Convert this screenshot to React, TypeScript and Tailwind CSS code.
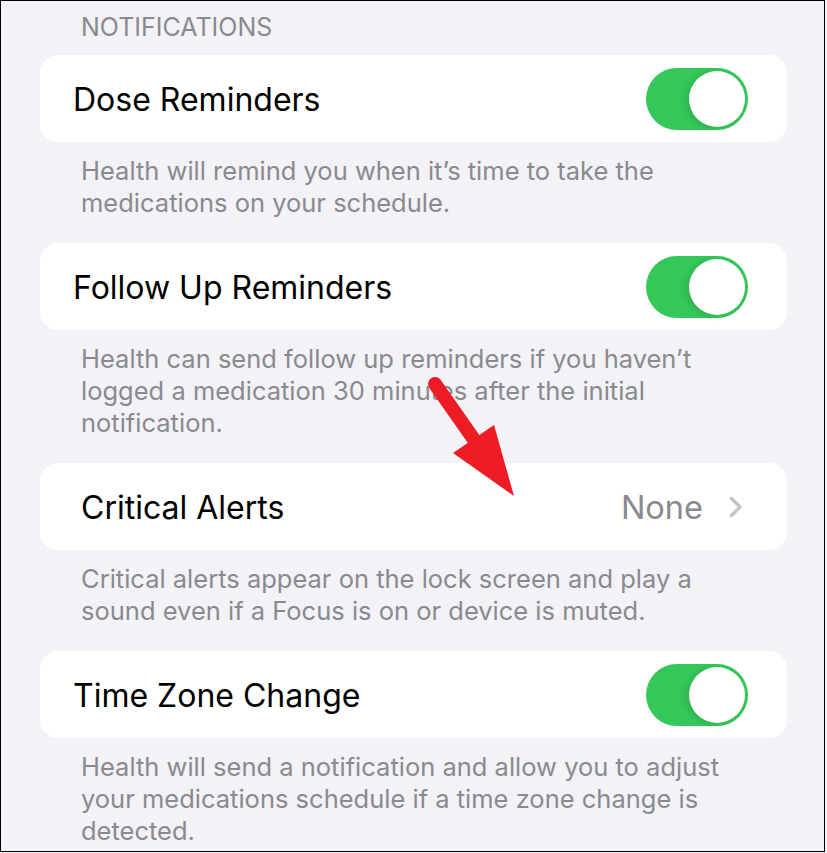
import type { ReactNode } from "react";

type Row = {
  label: string;
  footer: string[];
  kind: "toggle" | "link";
  value?: string;
};

const ROWS: Row[] = [
  {
    label: "Dose Reminders",
    kind: "toggle",
    footer: [
      "Health will remind you when it\u2019s time to take the",
      "medications on your schedule.",
    ],
  },
  {
    label: "Follow Up Reminders",
    kind: "toggle",
    footer: [
      "Health can send follow up reminders if you haven\u2019t",
      "logged a medication 30 minutes after the initial",
      "notification.",
    ],
  },
  {
    label: "Critical Alerts",
    kind: "link",
    value: "None",
    footer: [
      "Critical alerts appear on the lock screen and play a",
      "sound even if a Focus is on or device is muted.",
    ],
  },
  {
    label: "Time Zone Change",
    kind: "toggle",
    footer: [
      "Health will send a notification and allow you to adjust",
      "your medications schedule if a time zone change is",
      "detected.",
    ],
  },
];

function Toggle() {
  return (
    <div className="flex h-[62px] w-[102px] items-center justify-end rounded-full bg-[#34c759] p-[3px]">
      <div className="h-[56px] w-[56px] rounded-full bg-white shadow-[-3px_1px_6px_rgba(0,0,0,0.12)]" />
    </div>
  );
}

function Chevron() {
  return (
    <svg width="14" height="22" viewBox="0 0 14 22" fill="none">
      <path
        d="M2.5 2.5 L11 11 L2.5 19.5"
        stroke="#c4c4c7"
        strokeWidth="3.4"
        strokeLinecap="round"
        strokeLinejoin="round"
      />
    </svg>
  );
}

function Card({ row }: { row: Row }) {
  const isLink = row.kind === "link";
  let trailing: ReactNode;
  if (isLink) {
    trailing = (
      <div className="flex items-center gap-[26px] pr-[44px]">
        <span className="pt-[3px] text-[32.5px] text-[#8a8a8e]">{row.value}</span>
        <Chevron />
      </div>
    );
  } else {
    trailing = (
      <div className="pr-[39px]">
        <Toggle />
      </div>
    );
  }

  return (
    <div className="flex h-[87px] items-center justify-between rounded-[18px] bg-white">
      <span
        className={`pt-[3px] text-[32px] text-black ${
          isLink ? "pl-[41px]" : "pl-[33px]"
        }`}
      >
        {row.label}
      </span>
      {trailing}
    </div>
  );
}

function RedArrow() {
  return (
    <svg
      className="pointer-events-none absolute left-[420px] top-[370px]"
      width="110"
      height="135"
      viewBox="420 370 110 135"
    >
      <line
        x1="434"
        y1="383"
        x2="474"
        y2="440"
        stroke="#ed1c24"
        strokeWidth="14"
        strokeLinecap="round"
      />
      <polygon points="452,452 493,424 513,495" fill="#ed1c24" />
    </svg>
  );
}

export default function App() {
  return (
    <div className="min-h-screen bg-[#f2f2f7]">
      <div
        className="relative h-[852px] w-[825px] overflow-hidden border border-black bg-[#f2f2f7]"
        style={{ fontFamily: "Inter, 'Noto Sans', sans-serif" }}
      >
        <div className="pl-[39px] pr-[37px] pt-[10px]">
          <div className="pl-[41px] text-[25px] leading-[32px] text-[#8a8a8e]">
            NOTIFICATIONS
          </div>
          <div className="mt-[12px]">
            {ROWS.map((row) => (
              <div key={row.label}>
                <Card row={row} />
                <div className="pb-[24px] pl-[41px] pt-[13px] text-[25.5px] leading-[32px] text-[#8a8a8e]">
                  {row.footer.map((line) => (
                    <div key={line} className="whitespace-nowrap">
                      {line}
                    </div>
                  ))}
                </div>
              </div>
            ))}
          </div>
        </div>
        <RedArrow />
      </div>
    </div>
  );
}
